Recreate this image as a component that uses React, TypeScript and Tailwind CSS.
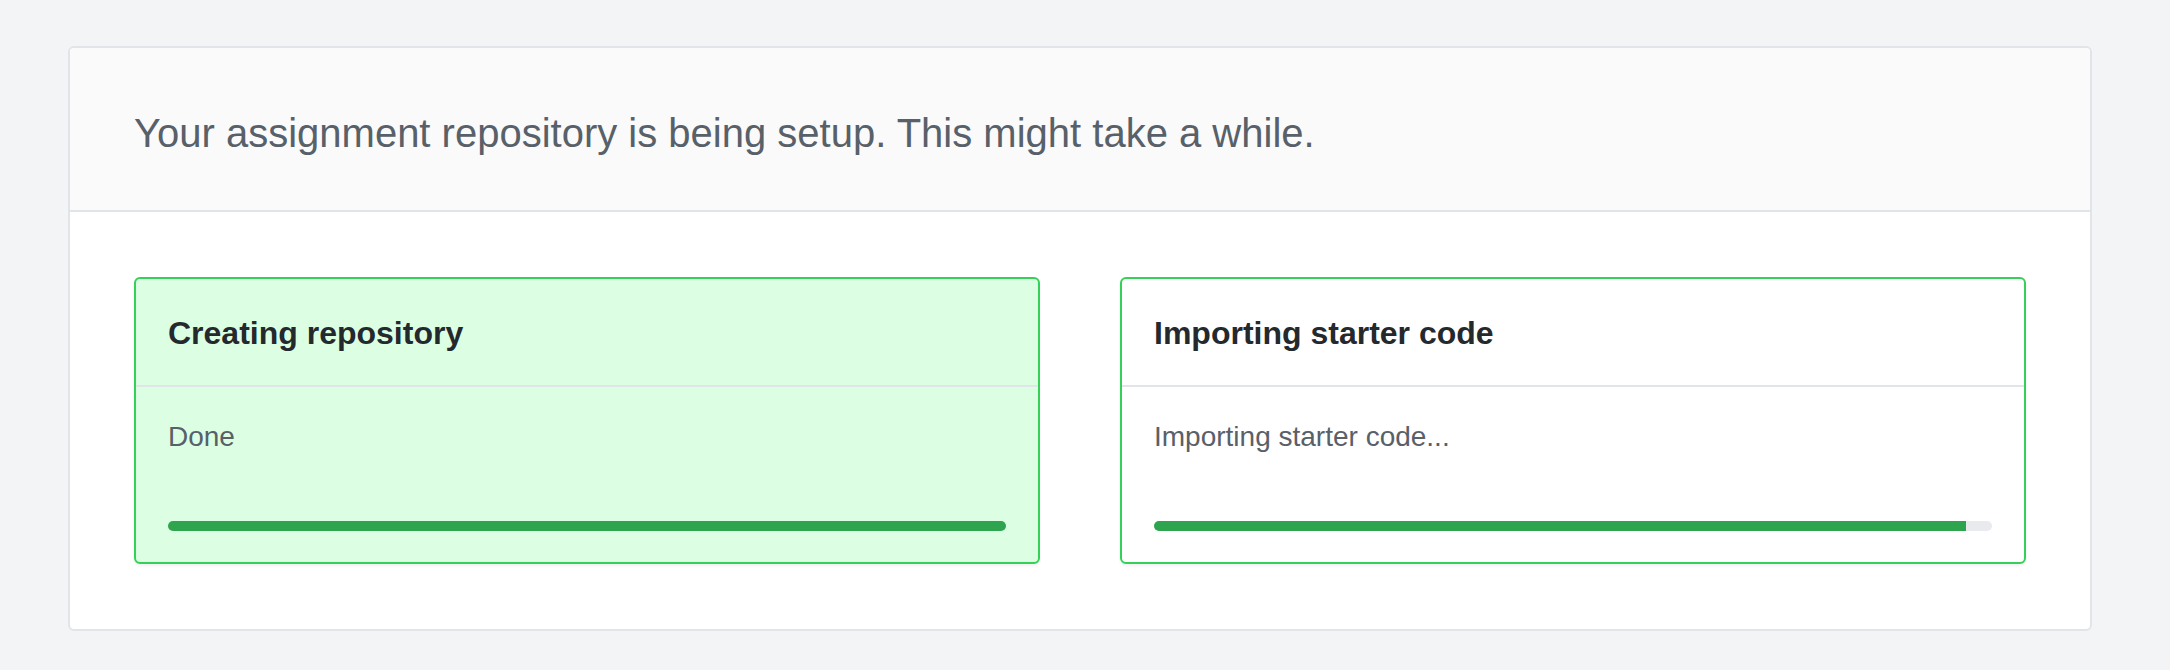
import React from "react";

type Step = {
  title: string;
  status: string;
  progress: number;
  done: boolean;
};

const steps: Step[] = [
  { title: "Creating repository", status: "Done", progress: 100, done: true },
  { title: "Importing starter code", status: "Importing starter code...", progress: 96.9, done: false },
];

function StepCard({ step }: { step: Step }) {
  return (
    <div
      className={`rounded-[6px] border-2 border-[#34d058] shadow-[0_2px_3px_rgba(0,0,0,0.06)] ${
        step.done ? "bg-[#dcffe4]" : "bg-white"
      }`}
    >
      <div className="flex h-[108px] items-center border-b-2 border-[#e1e4e8] px-[32px] pt-[2px]">
        <h3 className="text-[32px] font-bold leading-[48px] text-[#24292e]">{step.title}</h3>
      </div>
      <div className="px-[32px] pt-[29px] pb-[31px]">
        <p className="text-[28px] leading-[42px] text-[#586069]">{step.status}</p>
        <div className="mt-[63px] h-[10px] w-full overflow-hidden rounded-full bg-[#e9eaee]">
          <div className="h-full bg-[#2ea44f]" style={{ width: `${step.progress}%` }} />
        </div>
      </div>
    </div>
  );
}

export default function App() {
  return (
    <div
      className="min-h-[670px] bg-[#f3f4f6] pt-[46px] pl-[68px]"
      style={{ fontFamily: '"Liberation Sans", Arial, Helvetica, sans-serif' }}
    >
      <div className="w-[2024px] overflow-hidden rounded-[6px] border-2 border-[#e1e4e8] bg-white">
        <div className="flex h-[164px] items-center border-b-2 border-[#e1e4e8] bg-[#fafafa] px-[64px] pt-[7px]">
          <p className="text-[40px] leading-[48px] text-[#586069]">
            Your assignment repository is being setup. This might take a while.
          </p>
        </div>
        <div className="grid grid-cols-2 gap-[80px] px-[64px] pt-[65px] pb-[65px]">
          {steps.map((s) => (
            <StepCard key={s.title} step={s} />
          ))}
        </div>
      </div>
    </div>
  );
}
